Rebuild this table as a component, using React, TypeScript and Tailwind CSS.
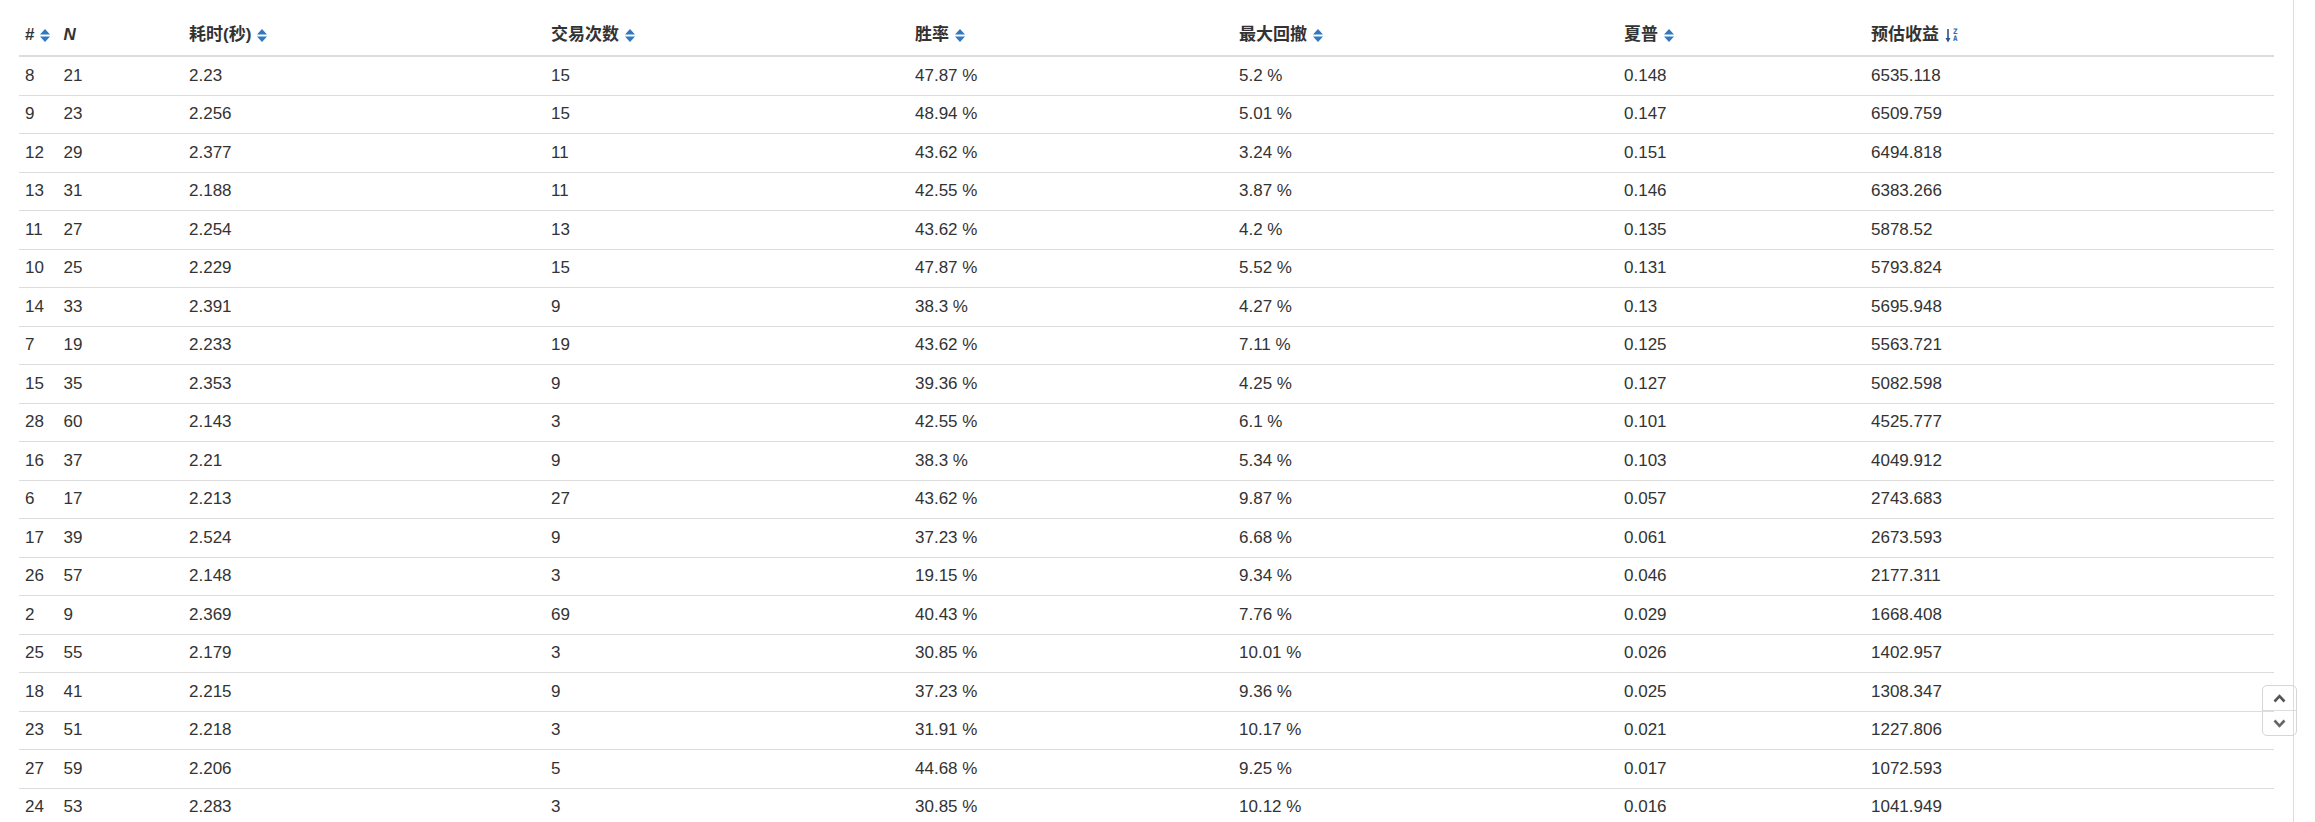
import React from "react";

const rows: string[][] = [
  ["8", "21", "2.23", "15", "47.87 %", "5.2 %", "0.148", "6535.118"],
  ["9", "23", "2.256", "15", "48.94 %", "5.01 %", "0.147", "6509.759"],
  ["12", "29", "2.377", "11", "43.62 %", "3.24 %", "0.151", "6494.818"],
  ["13", "31", "2.188", "11", "42.55 %", "3.87 %", "0.146", "6383.266"],
  ["11", "27", "2.254", "13", "43.62 %", "4.2 %", "0.135", "5878.52"],
  ["10", "25", "2.229", "15", "47.87 %", "5.52 %", "0.131", "5793.824"],
  ["14", "33", "2.391", "9", "38.3 %", "4.27 %", "0.13", "5695.948"],
  ["7", "19", "2.233", "19", "43.62 %", "7.11 %", "0.125", "5563.721"],
  ["15", "35", "2.353", "9", "39.36 %", "4.25 %", "0.127", "5082.598"],
  ["28", "60", "2.143", "3", "42.55 %", "6.1 %", "0.101", "4525.777"],
  ["16", "37", "2.21", "9", "38.3 %", "5.34 %", "0.103", "4049.912"],
  ["6", "17", "2.213", "27", "43.62 %", "9.87 %", "0.057", "2743.683"],
  ["17", "39", "2.524", "9", "37.23 %", "6.68 %", "0.061", "2673.593"],
  ["26", "57", "2.148", "3", "19.15 %", "9.34 %", "0.046", "2177.311"],
  ["2", "9", "2.369", "69", "40.43 %", "7.76 %", "0.029", "1668.408"],
  ["25", "55", "2.179", "3", "30.85 %", "10.01 %", "0.026", "1402.957"],
  ["18", "41", "2.215", "9", "37.23 %", "9.36 %", "0.025", "1308.347"],
  ["23", "51", "2.218", "3", "31.91 %", "10.17 %", "0.021", "1227.806"],
  ["27", "59", "2.206", "5", "44.68 %", "9.25 %", "0.017", "1072.593"],
  ["24", "53", "2.283", "3", "30.85 %", "10.12 %", "0.016", "1041.949"],
];

function SortIcon() {
  return (
    <svg width="10" height="15" viewBox="0 0 10 15" className="shrink-0">
      <polygon points="0,6.5 5,1 10,6.5" fill="#3178be" />
      <polygon points="0,8.5 5,14 10,8.5" fill="#3178be" />
    </svg>
  );
}

function SortDescIcon() {
  return (
    <span className="inline-flex items-center shrink-0">
      <svg width="6" height="15" viewBox="0 0 6 15">
        <line x1="3" y1="1" x2="3" y2="13" stroke="#2a5486" strokeWidth="1.6" />
        <polygon points="0.5,10 3,14.5 5.5,10" fill="#2a5486" />
      </svg>
      <span
        className="flex flex-col ml-[2px] text-[7.5px] leading-[7.5px] font-bold text-[#2f6aa8]"
        style={{ fontFamily: '"DejaVu Sans Mono", monospace' }}
      >
        <span>Z</span>
        <span>A</span>
      </span>
    </span>
  );
}

function Th({ children, icon = "sort", italic = false }: { children: React.ReactNode; icon?: "sort" | "desc" | "none"; italic?: boolean }) {
  return (
    <th className="text-left align-bottom px-[6px] pt-[8px] pb-[8px] leading-[24px] font-bold border-b-2 border-[#dddddd] whitespace-nowrap">
      <span className="inline-flex items-center gap-[6px]">
        <span className={italic ? "italic" : ""}>{children}</span>
        {icon === "sort" && <SortIcon />}
        {icon === "desc" && <SortDescIcon />}
      </span>
    </th>
  );
}

export default function App() {
  return (
    <div
      className="h-[822px] w-[2315px] overflow-hidden bg-white relative text-[#333333] text-[17px]"
      style={{ fontFamily: '"Liberation Sans", Arial, "Noto Sans CJK SC", sans-serif' }}
    >
      <div className="w-[2294px] h-full border-r border-[#dddddd] px-[19px] pt-[15px]">
        <table className="w-full table-fixed border-separate border-spacing-0">
          <colgroup>
            <col className="w-[38.5px]" />
            <col className="w-[125.5px]" />
            <col className="w-[362px]" />
            <col className="w-[364px]" />
            <col className="w-[324px]" />
            <col className="w-[385px]" />
            <col className="w-[247px]" />
            <col />
          </colgroup>
          <thead>
            <tr>
              <Th>#</Th>
              <Th icon="none" italic>N</Th>
              <Th>耗时(秒)</Th>
              <Th>交易次数</Th>
              <Th>胜率</Th>
              <Th>最大回撤</Th>
              <Th>夏普</Th>
              <Th icon="desc">预估收益</Th>
            </tr>
          </thead>
          <tbody>
            {rows.map((r, i) => (
              <tr key={i}>
                {r.map((c, j) => (
                  <td
                    key={j}
                    className={
                      "px-[6px] py-[6.5px] leading-[24.5px] whitespace-nowrap " +
                      (i === 0 ? "" : "border-t border-[#dddddd]")
                    }
                  >
                    {c}
                  </td>
                ))}
              </tr>
            ))}
          </tbody>
        </table>
      </div>
      <div className="absolute left-[2262px] top-[685px] w-[35px] h-[51px] rounded-[5px] border border-[#d6d6d6] flex flex-col overflow-hidden">
        <div className="flex-1 flex items-center justify-center">
          <svg width="13" height="9" viewBox="0 0 13 9">
            <polyline points="1.5,7.5 6.5,2.2 11.5,7.5" fill="none" stroke="#555555" strokeWidth="2.6" />
          </svg>
        </div>
        <div className="flex-1 flex items-center justify-center border-t border-[#dddddd]">
          <svg width="13" height="9" viewBox="0 0 13 9">
            <polyline points="1.5,1.5 6.5,6.8 11.5,1.5" fill="none" stroke="#666666" strokeWidth="2.6" />
          </svg>
        </div>
      </div>
    </div>
  );
}
